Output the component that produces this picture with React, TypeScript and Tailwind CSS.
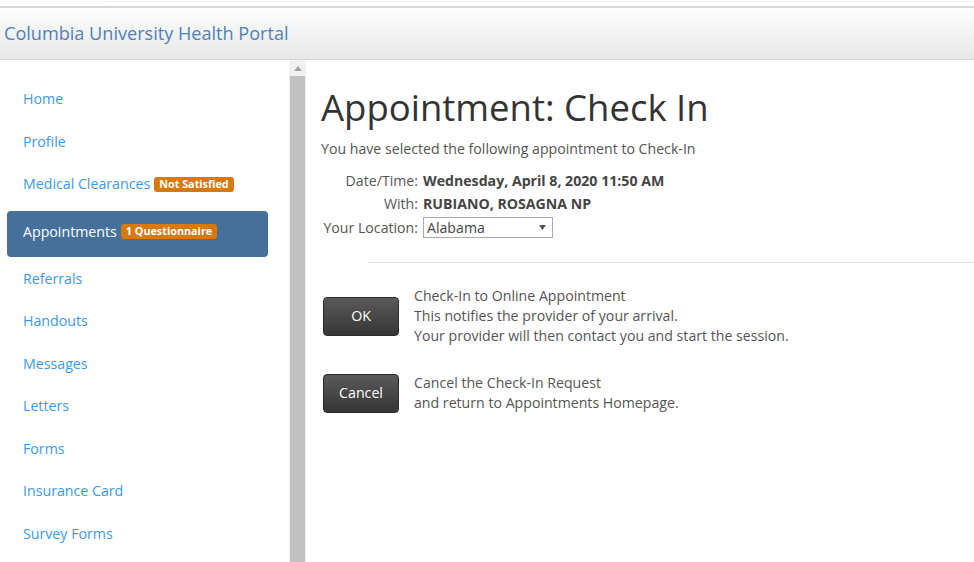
type NavItem = {
  label: string;
  badge?: string;
  active?: boolean;
};

const navItems: NavItem[] = [
  { label: "Home" },
  { label: "Profile" },
  { label: "Medical Clearances", badge: "Not Satisfied" },
  { label: "Appointments", badge: "1 Questionnaire", active: true },
  { label: "Referrals" },
  { label: "Handouts" },
  { label: "Messages" },
  { label: "Letters" },
  { label: "Forms" },
  { label: "Insurance Card" },
  { label: "Survey Forms" },
];

function Badge({ text }: { text: string }) {
  return (
    <span className="ml-[4px] inline-flex h-[15px] items-center rounded-[3px] bg-[#d9780b] px-[5px] text-[10.8px] font-bold leading-none text-white">
      {text}
    </span>
  );
}

function Sidebar() {
  return (
    <div className="flex w-[289px] shrink-0 flex-col pt-[17.75px]">
      {navItems.map((item) =>
        item.active ? (
          <div
            key={item.label}
            className="mt-[6px] ml-[7px] flex h-[46px] w-[261px] items-center rounded-[4px] bg-[#45709c] px-[16px] pb-[5px] text-[14.2px] text-white"
          >
            {item.label}
            {item.badge && <Badge text={item.badge} />}
          </div>
        ) : (
          <div
            key={item.label}
            className="ml-[7px] flex h-[42.5px] w-[261px] items-center px-[16px] text-[14.2px] text-[#3d99e6]"
          >
            {item.label}
            {item.badge && <Badge text={item.badge} />}
          </div>
        )
      )}
    </div>
  );
}

function Scrollbar() {
  return (
    <div className="flex w-[17px] shrink-0 flex-col bg-[#f1f1f1]">
      <div className="flex h-[16px] items-center justify-center">
        <svg width="8" height="5" viewBox="0 0 8 5">
          <path d="M4 0 L8 5 L0 5 Z" fill="#a3a3a3" />
        </svg>
      </div>
      <div className="mx-[1px] flex-1 bg-[#c1c1c1]" />
    </div>
  );
}

function ActionRow({
  label,
  lines,
}: {
  label: string;
  lines: string[];
}) {
  return (
    <div className="flex items-center">
      <button
        type="button"
        className="ml-[2px] h-[39px] w-[76px] shrink-0 rounded-[4px] border border-[#2a2a2a] bg-gradient-to-b from-[#5a5a5a] to-[#363636] text-[14.2px] text-white"
      >
        {label}
      </button>
      <div className="ml-[15px] text-[14.15px] leading-[20px] text-[#555]">
        {lines.map((l) => (
          <div key={l}>{l}</div>
        ))}
      </div>
    </div>
  );
}

function CheckIn() {
  return (
    <div className="flex-1 overflow-hidden pl-[15px]">
      <h1 className="mt-[27px] text-[36.5px] leading-[1.1] text-[#333]">
        Appointment: Check In
      </h1>
      <p className="mt-[12px] text-[14.15px] leading-[20px] text-[#555]">
        You have selected the following appointment to Check-In
      </p>
      <div className="mt-[10px] grid grid-cols-[97px_auto] gap-x-[5px] text-[14.15px] text-[#555]">
        <div className="flex h-[23px] items-center justify-end">Date/Time:</div>
        <div className="flex h-[23px] items-center font-bold text-[#444]">
          Wednesday, April 8, 2020 11:50 AM
        </div>
        <div className="flex h-[23px] items-center justify-end">With:</div>
        <div className="flex h-[23px] items-center font-bold text-[#444]">
          RUBIANO, ROSAGNA NP
        </div>
        <div className="flex h-[25px] items-center justify-end">Your Location:</div>
        <div className="flex h-[25px] items-center">
          <div className="relative">
            <select
              defaultValue="Alabama"
              className="h-[21px] w-[130px] appearance-none border border-[#a9a9a9] bg-white pl-[3px] text-[14.15px] leading-[19px] text-[#444] outline-none"
            >
              <option>Alabama</option>
              <option>Alaska</option>
              <option>Arizona</option>
              <option>New York</option>
            </select>
            <svg
              className="pointer-events-none absolute right-[7px] top-[8px]"
              width="7"
              height="5"
              viewBox="0 0 7 5"
            >
              <path d="M0 0 L7 0 L3.5 5 Z" fill="#555" />
            </svg>
          </div>
        </div>
      </div>
      <div className="ml-[47px] mt-[22px] border-t border-[#e6e6e6]" />
      <div className="mt-[23px] flex flex-col gap-[27px]">
        <ActionRow
          label="OK"
          lines={[
            "Check-In to Online Appointment",
            "This notifies the provider of your arrival.",
            "Your provider will then contact you and start the session.",
          ]}
        />
        <ActionRow
          label="Cancel"
          lines={[
            "Cancel the Check-In Request",
            "and return to Appointments Homepage.",
          ]}
        />
      </div>
    </div>
  );
}

export default function App() {
  return (
    <div className="flex h-[562px] w-[974px] flex-col overflow-hidden bg-white font-['Open_Sans',sans-serif]">
      <div className="h-[6px] shrink-0 bg-white">
        <div className="ml-[105px] mt-[1px] h-[1px] bg-[#ececec]" />
      </div>
      <header className="flex h-[54px] shrink-0 items-center border-t-2 border-b border-t-[#d6d6dc] border-b-[#d4d4d4] bg-gradient-to-b from-[#fdfdfd] to-[#e7e7e7] pl-[4px]">
        <span className="text-[18.1px] text-[#4f82b8]">
          Columbia University Health Portal
        </span>
      </header>
      <div className="flex min-h-0 flex-1">
        <Sidebar />
        <Scrollbar />
        <CheckIn />
      </div>
    </div>
  );
}
